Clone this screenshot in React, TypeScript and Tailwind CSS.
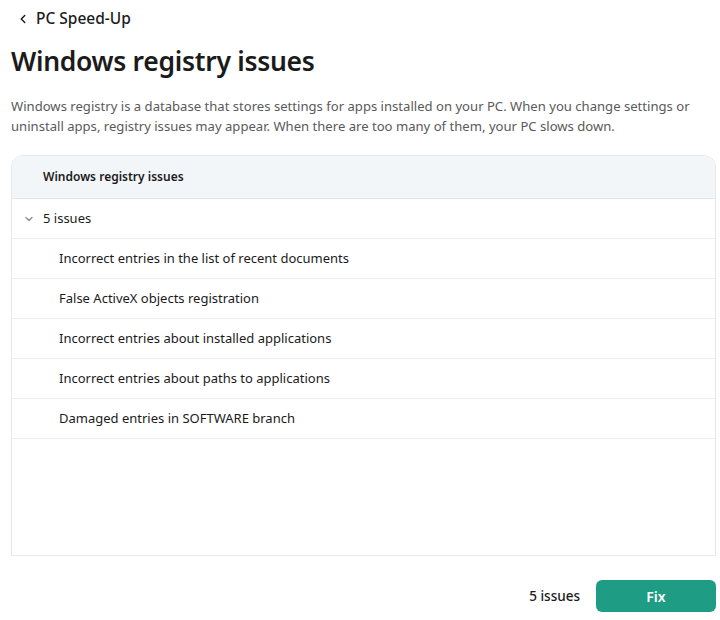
import { ChevronLeft, ChevronDown } from "lucide-react";

const issues = [
  "Incorrect entries in the list of recent documents",
  "False ActiveX objects registration",
  "Incorrect entries about installed applications",
  "Incorrect entries about paths to applications",
  "Damaged entries in SOFTWARE branch",
];

export default function App() {
  return (
    <div className="flex h-[620px] w-[720px] flex-col bg-white pl-[11px] pr-[4px] font-['Noto_Sans',sans-serif] text-[#1b1b1b]">
      <button className="mt-[7px] flex items-center gap-[6px] self-start pl-[5px] text-[15.5px] font-medium">
        <ChevronLeft className="h-[14px] w-[14px]" strokeWidth={2.5} />
        PC Speed-Up
      </button>

      <h1 className="mt-[13px] text-[26.5px] font-semibold leading-[36px] tracking-[-0.3px]">
        Windows registry issues
      </h1>

      <p className="mt-[17px] text-[13.1px] leading-[20px] text-[#5a5a5a]">
        Windows registry is a database that stores settings for apps installed on your PC. When you change settings or
        uninstall apps, registry issues may appear. When there are too many of them, your PC slows down.
      </p>

      <div className="mt-[19px] flex h-[401px] flex-col rounded-t-[12px] border border-[#e6e9ec]">
        <div className="flex h-[43px] items-center rounded-t-[12px] border-b border-[#e3e7eb] bg-[#f3f6f9] pl-[31px] text-[12px] font-semibold">
          Windows registry issues
        </div>
        <div className="flex h-[40px] items-center gap-[8px] border-b border-[#ebedef] pl-[11px] text-[13px]">
          <ChevronDown className="h-[12px] w-[12px] text-[#888]" strokeWidth={2.5} />
          5 issues
        </div>
        {issues.map((issue) => (
          <div key={issue} className="flex h-[40px] items-center border-b border-[#ebedef] pl-[47px] text-[13px]">
            {issue}
          </div>
        ))}
      </div>

      <div className="mt-[24px] flex items-center justify-end gap-[16px]">
        <span className="text-[13.5px] font-medium">5 issues</span>
        <button className="h-[32px] w-[120px] rounded-[6px] bg-[#1f9c84] text-[14px] font-semibold text-white">
          Fix
        </button>
      </div>
    </div>
  );
}
